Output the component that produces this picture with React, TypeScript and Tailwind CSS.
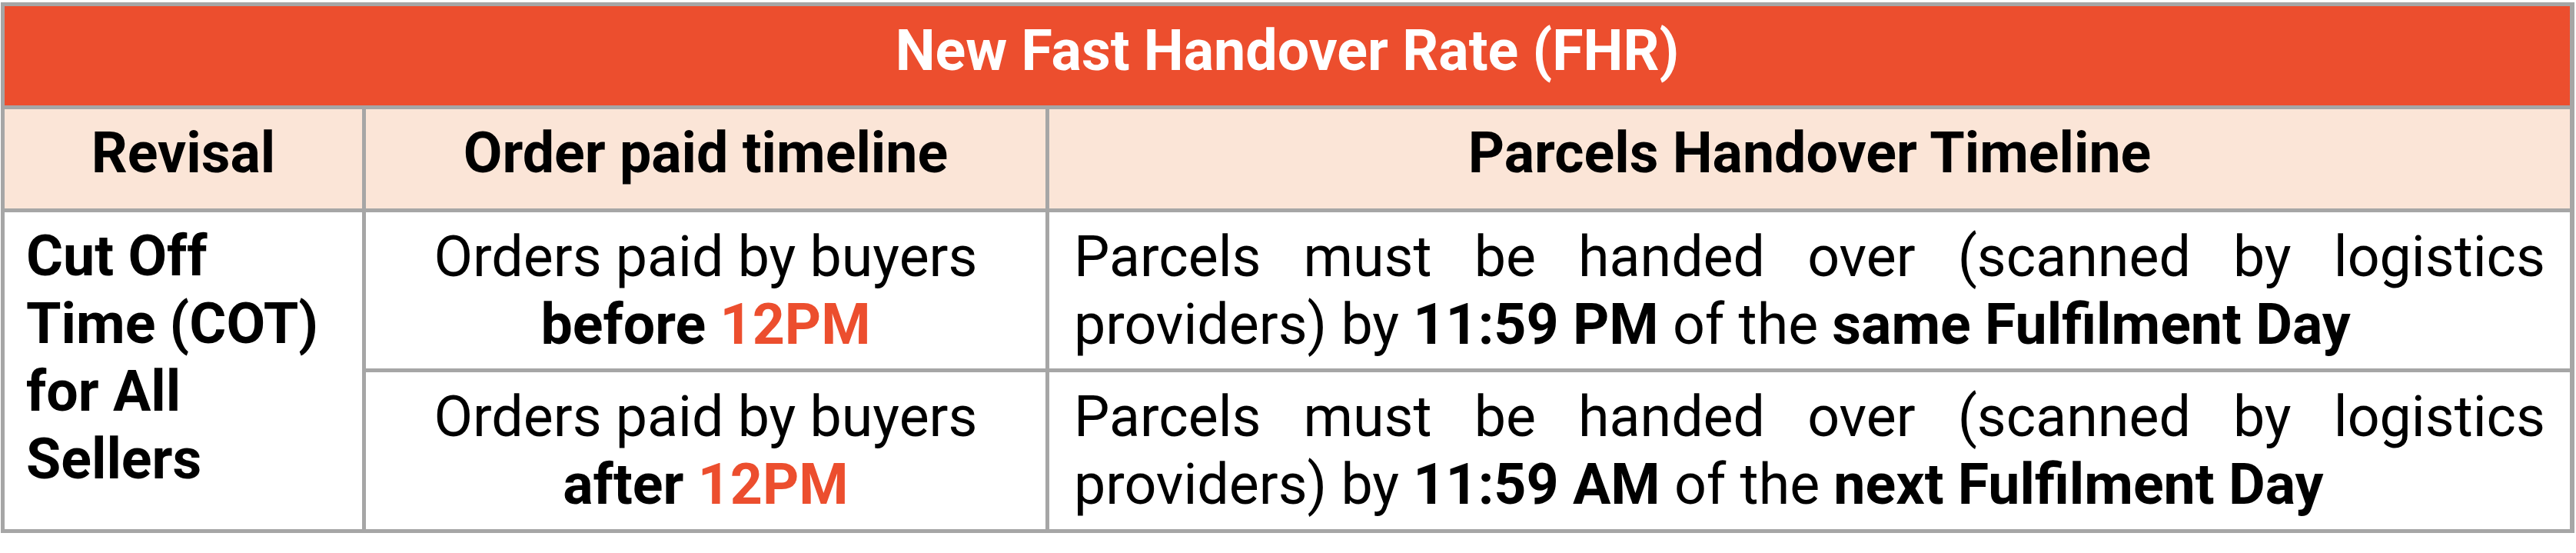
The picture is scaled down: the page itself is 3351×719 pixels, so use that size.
export default function App() {
  const red = "text-[#ec4e2e]";
  return (
    <div className="w-[3351px] h-[719px] bg-white [font-family:Roboto,'Liberation_Sans',sans-serif] text-black">
      <div className="ml-[1px] pt-[3px]">
        <div className="w-[3348px] grid grid-cols-[465px_884px_1978px] grid-rows-[129px_129px_203px_204px] gap-[5px] p-[5px] bg-[#a6a6a6] text-[73.5px] leading-[88px]">
          <div className="col-span-3 bg-[#ec4e2e] flex items-center justify-center pb-[14px] text-white font-bold">
            New Fast Handover Rate (FHR)
          </div>
          <div className="bg-[#fbe5d7] flex items-center justify-center pb-[15px] font-bold">Revisal</div>
          <div className="bg-[#fbe5d7] flex items-center justify-center pb-[15px] font-bold">Order paid timeline</div>
          <div className="bg-[#fbe5d7] flex items-center justify-center pb-[15px] font-bold">Parcels Handover Timeline</div>

          <div className="row-span-2 bg-white pl-[28px] pt-[13px] font-bold">
            Cut Off
            <br />
            Time (COT)
            <br />
            for All
            <br />
            Sellers
          </div>
          <div className="bg-white flex items-center justify-center text-center">
            <p>
              Orders paid by buyers
              <br />
              <span className="font-bold">before</span> <span className={`font-bold ${red}`}>12PM</span>
            </p>
          </div>
          <div className="bg-white flex items-center px-8">
            <p className="w-full text-justify">
              Parcels must be handed over (scanned by logistics providers) by{" "}
              <span className="font-bold">11:59 PM</span> of the <span className="font-bold">same Fulfilment Day</span>
            </p>
          </div>

          <div className="bg-white flex items-center justify-center text-center">
            <p>
              Orders paid by buyers
              <br />
              <span className="font-bold">after</span> <span className={`font-bold ${red}`}>12PM</span>
            </p>
          </div>
          <div className="bg-white flex items-center px-8">
            <p className="w-full text-justify">
              Parcels must be handed over (scanned by logistics providers) by{" "}
              <span className="font-bold">11:59 AM</span> of the <span className="font-bold">next Fulfilment Day</span>
            </p>
          </div>
        </div>
      </div>
    </div>
  );
}
